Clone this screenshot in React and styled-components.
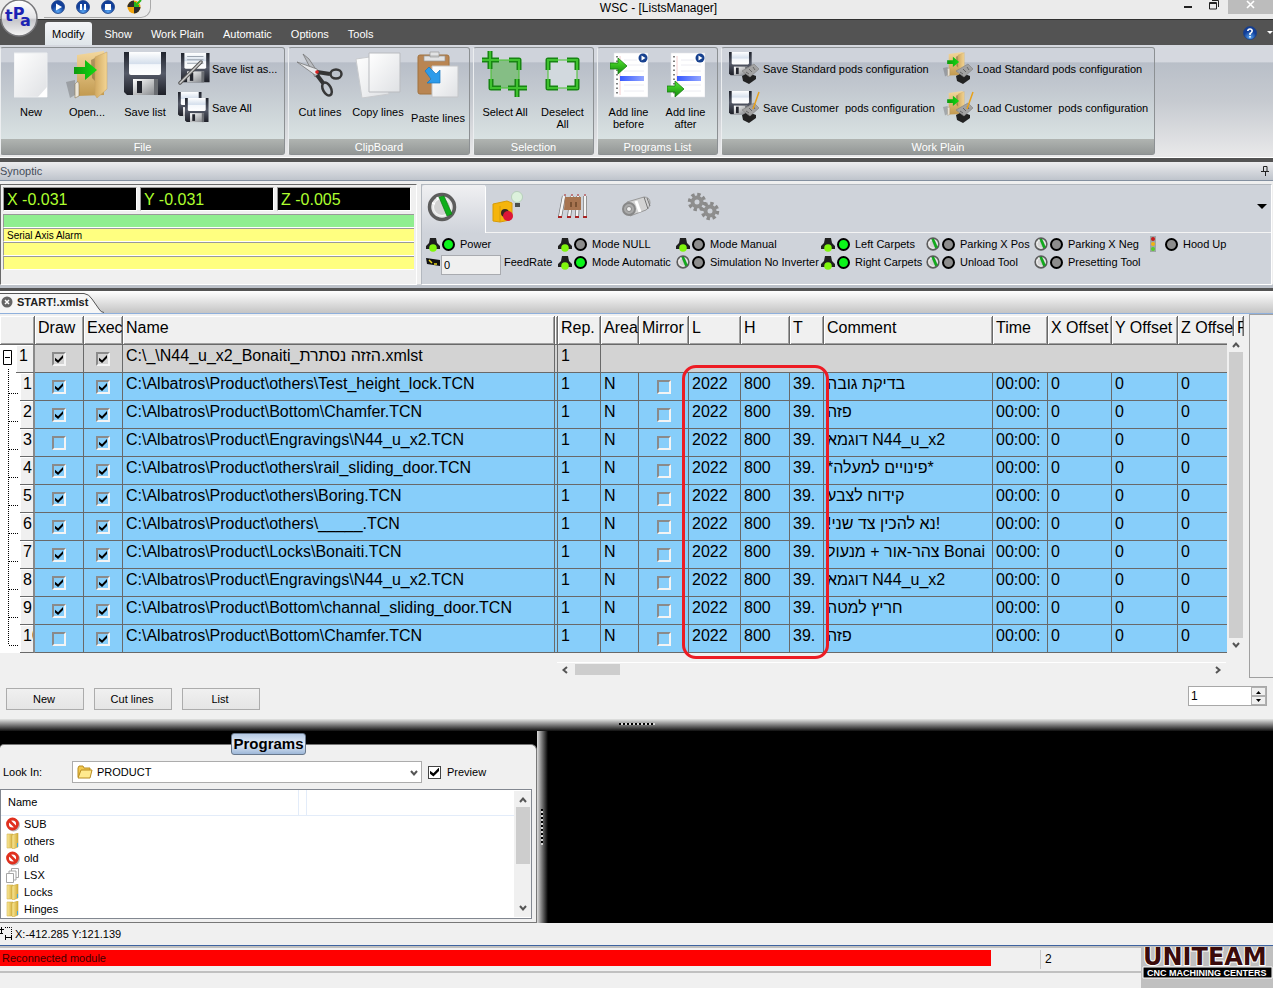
import React from "react";
import styled, { createGlobalStyle } from "styled-components";

const GlobalStyle = createGlobalStyle`
  *, *::before, *::after { box-sizing: border-box; }
  body {
    margin: 0;
    background: #f0f0f0;
    color: #000;
    font: 11px/14px "Liberation Sans", Arial, sans-serif;
  }
  button, input, select { font: inherit; color: inherit; }
  button { padding: 0; border: 0; background: none; }
  svg { display: block; flex: none; }
`;

/* ---------- icons ---------- */

const Defs = () => (
  <svg width="0" height="0" style={{ position: "absolute" }} aria-hidden="true">
    <defs>
      <linearGradient id="paper" x2="1" y2="1">
        <stop stopColor="#fff" /><stop offset="1" stopColor="#dfe1e4" />
      </linearGradient>
      <linearGradient id="disk" x2="0" y2="1">
        <stop stopColor="#1f232c" /><stop offset=".5" stopColor="#555a68" /><stop offset="1" stopColor="#1e2028" />
      </linearGradient>
      <linearGradient id="label" x2="0" y2="1">
        <stop stopColor="#fff" /><stop offset=".5" stopColor="#d5dfec" /><stop offset=".55" stopColor="#f4f7fb" /><stop offset="1" stopColor="#fff" />
      </linearGradient>
      <linearGradient id="metal" x2="1" y2="1">
        <stop stopColor="#fff" /><stop offset="1" stopColor="#7f8286" />
      </linearGradient>
      <linearGradient id="folderBack" x2="0" y2="1">
        <stop stopColor="#f3d79d" /><stop offset="1" stopColor="#c29a50" />
      </linearGradient>
      <linearGradient id="folderFront" x2="1">
        <stop stopColor="#d2aa62" /><stop offset="1" stopColor="#f3d594" />
      </linearGradient>
      <linearGradient id="green" x2="0" y2="1">
        <stop stopColor="#57ea31" /><stop offset="1" stopColor="#118a0c" />
      </linearGradient>
      <linearGradient id="arrow" x2="1">
        <stop stopColor="#0d9a0d" /><stop offset="1" stopColor="#12dc12" />
      </linearGradient>
      <linearGradient id="yellowFolder" x2="1">
        <stop stopColor="#fbeb9c" /><stop offset="1" stopColor="#d3ab35" />
      </linearGradient>
      <linearGradient id="bluebar" x2="1">
        <stop stopColor="#3658ff" /><stop offset="1" stopColor="#93a6ff" />
      </linearGradient>
      <linearGradient id="orb" x2="0" y2="1">
        <stop stopColor="#fff" /><stop offset=".5" stopColor="#e3e3e5" /><stop offset=".55" stopColor="#c5c5c9" /><stop offset="1" stopColor="#f5f5f5" />
      </linearGradient>
      <radialGradient id="blueBall" cy=".85">
        <stop stopColor="#57a5f2" /><stop offset="1" stopColor="#123f99" />
      </radialGradient>
    </defs>
  </svg>
);

const Icon = ({ w, h, children }) => (
  <svg width={w} height={h} viewBox={`0 0 ${w} ${h}`} aria-hidden="true">{children}</svg>
);

const Disk = () => (
  <>
    <path d="M0 0H42V43H3L0 40Z" fill="url(#disk)" />
    <path d="M5 0H37V21Q37 23 35 23H7Q5 23 5 21Z" fill="url(#label)" />
    <path d="M9 27H34V43H9Z" fill="url(#metal)" />
    <path d="M13 29H18V41H13Z" fill="#23252d" />
    <path d="M30 27H34V43H30Z" fill="#6a6d72" />
  </>
);

const Folder = () => (
  <>
    <path d="M0 31L9 29V44L4 47Z" fill="#555" opacity=".35" />
    <path d="M11 4L38 0V44L11 45Z" fill="url(#folderBack)" />
    <path d="M9 33Q13 28 13 34V45L9 47Z" fill="#ece6d8" stroke="#8b7a5b" strokeWidth=".6" />
    <path d="M25 9L29 7V30L26 27Z" fill="#72592c" opacity=".5" />
    <path d="M29 6L41 1V38L31 47L29 44Z" fill="url(#folderFront)" stroke="#c4a162" strokeWidth=".5" />
    <path d="M8 16H19V9L31 19L19 29V23H8Z" fill="url(#arrow)" />
  </>
);

const Pods = ({ pencil }) => (
  <>
    <path d="M13 24L19 21L27 24V27L20 32L14 29Z" fill="#222" />
    <path d="M13 19L25 12L30 17L21 25Z" fill="#a2a2a2" stroke="#858585" strokeWidth=".7" />
    <path d="M17 20L20 22M20 17L23 20M24 15L26 18" stroke="#666" />
    {pencil && <path d="M24 18L30 1" stroke="#e7a11c" strokeWidth="1.5" />}
  </>
);

const GreenArrow = ({ x = 0, y = 0 }) => (
  <path transform={`translate(${x} ${y})`} d="M0 5H8V0L17 8L8 16V11H0Z" fill="url(#green)" stroke="#197d14" strokeWidth=".8" />
);

const ProgramSheet = ({ arrowY }) => (
  <Icon w={38} h={48}>
    <path d="M4 2H38V46H4Z" fill="#fff" stroke="#e2e2e8" strokeWidth=".6" />
    <path d="M7 5V44" stroke="#555" strokeWidth="1.5" strokeDasharray="1.5 3" />
    <path d="M10 5V44" stroke="#f4cccc" />
    <path d="M14 9H27M14 14H34M14 20H34M14 34H34M14 40H34" stroke="#ececf2" />
    <path d="M10 25H34V30H10Z" fill="url(#bluebar)" />
    <circle cx="33" cy="7" r="4.500" fill="#17418f" />
    <path d="M31.500 4.500L35.500 7L31.500 9.500Z" fill="#fff" />
    <GreenArrow y={arrowY} />
  </Icon>
);

const corner = { fill: "none", stroke: "#178512", strokeWidth: 5, strokeLinejoin: "round" };
const cornerHi = { fill: "none", stroke: "#3fc22f", strokeWidth: 2 };

const art = {
  newPage: (
    <Icon w={34} h={46}>
      <path d="M0 1H33V45H0Z" fill="url(#paper)" stroke="#eceef0" />
      <path d="M24 45L33 35V45Z" fill="#fff" />
    </Icon>
  ),
  open: <Icon w={42} h={48}><Folder /></Icon>,
  save: <Icon w={42} h={46}><Disk /></Icon>,
  saveAs: (
    <Icon w={32} h={32}>
      <g transform="translate(3 0) scale(.68)">
        <Disk />
        <path d="M9 5H33M9 10H33M9 15H33" stroke="#9ba4b0" strokeWidth="1.500" />
      </g>
      <path d="M2 30L23 9" stroke="#555" strokeWidth="3.500" strokeLinecap="round" />
      <path d="M2 30L23 9" stroke="#cfcfcf" strokeWidth="1.500" strokeLinecap="round" />
    </Icon>
  ),
  saveAll: (
    <Icon w={32} h={32}>
      <g transform="scale(.56)"><Disk /></g>
      <g transform="translate(7 6) scale(.56)"><Disk /></g>
    </Icon>
  ),
  cut: (
    <Icon w={46} h={46}>
      <path d="M6 2L12 7L22 22L18 25Z" fill="#b9bcc1" stroke="#777" strokeWidth=".8" />
      <path d="M0 10L20 17L23 23L18 23Z" fill="#e6e7ea" stroke="#777" strokeWidth=".8" />
      <path d="M20 20L33 22M20 23L26 31" stroke="#333" strokeWidth="4" />
      <ellipse cx="39" cy="22" rx="5.500" ry="4.500" fill="none" stroke="#373737" strokeWidth="2.500" />
      <ellipse cx="30" cy="37" rx="4" ry="7" transform="rotate(-28 30 37)" fill="none" stroke="#373737" strokeWidth="2.500" />
      <circle cx="20" cy="20" r="1.800" fill="#d22" />
    </Icon>
  ),
  copy: (
    <Icon w={46} h={46}>
      <path d="M1 7L28 3L34 42L7 46Z" fill="url(#paper)" stroke="#c9cbce" />
      <path d="M14 1H45V40H14Z" fill="url(#paper)" stroke="#b9bbbf" />
    </Icon>
  ),
  paste: (
    <Icon w={42} h={48}>
      <rect x="1" y="4" width="31" height="39" rx="2" fill="#b98552" stroke="#a1723f" />
      <path d="M7 5H28V10H7ZM13 1H22V6H13Z" fill="#e2e3e4" stroke="#9a9a9a" strokeWidth=".7" />
      <path d="M15 15H41V46H15Z" fill="url(#paper)" stroke="#c3c5c8" />
      <path d="M8 20L12 16L19 23L23 19V32H10L14 28Z" fill="#2d9bea" stroke="#1877c0" strokeWidth=".7" />
    </Icon>
  ),
  selectAll: (
    <Icon w={48} h={48}>
      <rect x="10" y="9" width="28" height="28" fill="#85be85" stroke="#46c12e" />
      {[corner, cornerHi].map((p, i) => (
        <path key={i} {...p} d="M28 9H38V19M10 28V37H20M9 0V18M1 9H18M36 28V46M27 37H46" />
      ))}
    </Icon>
  ),
  deselectAll: (
    <Icon w={36} h={48}>
      <rect x="3" y="9" width="29" height="28" fill="#d2d9de" stroke="#46c12e" />
      {[corner, cornerHi].map((p, i) => (
        <path key={i} {...p} d="M3 19V9H13M22 9H32V19M3 28V37H13M22 37H32V28" />
      ))}
    </Icon>
  ),
  before: <ProgramSheet arrowY={7} />,
  after: <ProgramSheet arrowY={30} />,
};

const SavePods = ({ pencil }) => (
  <Icon w={32} h={34}><g transform="scale(.54)"><Disk /></g><Pods pencil={pencil} /></Icon>
);
const LoadPods = ({ pencil }) => (
  <Icon w={32} h={34}><g transform="scale(.52)"><Folder /></g><Pods pencil={pencil} /></Icon>
);

const Ball = ({ children }) => (
  <Icon w={14} h={14}>
    <circle cx="7" cy="7" r="6.500" fill="url(#blueBall)" stroke="#1b3f86" strokeWidth=".8" />
    {children}
  </Icon>
);

const Dial = ({ size }) => (
  <svg width={size} height={size} viewBox="0 0 30 30" aria-hidden="true">
    <circle cx="15" cy="15" r="12.500" fill="#e6e6e6" stroke="#5d5d5d" strokeWidth="3.500" />
    <circle cx="15" cy="15" r="8.500" fill="#d2d2d2" stroke="#f8f8f8" />
    <path d="M12 5L17 4L25 22L20 24Z" fill="#0fae1b" stroke="#087a10" strokeWidth=".7" />
    <path d="M5 11L8 12M10 5L11 8" stroke="#fff" strokeWidth="1.500" />
  </svg>
);

const Estop = () => (
  <Icon w={32} h={32}>
    <path d="M1 13L15 10L20 12V26L18 29L8 31L1 30Z" fill="#f5b50c" stroke="#d79c08" />
    <path d="M8 15V31" stroke="#d79c08" />
    <circle cx="13" cy="22" r="4" fill="#3a2620" />
    <circle cx="16" cy="25" r="5" fill="#dc1537" />
    <circle cx="25" cy="6" r="5.500" fill="#dcf1dc" stroke="#a9c7ac" strokeWidth=".7" />
    <path d="M23 12H28V16H23Z" fill="#4b4f4c" />
  </Icon>
);
const Bench = () => (
  <Icon w={32} h={28}>
    <path d="M7 3L3 24M15 3L12 24M21 3L20 24M28 3V24" stroke="#777" strokeWidth="4" />
    <path d="M7 3L3 24M15 3L12 24M21 3L20 24M28 3V24" stroke="#f4f4f4" strokeWidth="2.500" />
    <path d="M8 4H24V17H7Z" fill="#a77450" />
    <path d="M14 9V14M19 9V14" stroke="#6c4529" strokeWidth="1.500" />
    <path d="M1 24H5M10 24H14M18 24H22M26 24H30" stroke="#a92323" strokeWidth="2" />
    <path d="M7 2H9M14 2H16M20 2H22M27 2H29" stroke="#a92323" />
  </Icon>
);
const Motor = () => (
  <Icon w={30} h={24}>
    <path d="M5 7L22 2Q28 2 28 8Q28 13 24 15L8 21Z" fill="#d3d3d3" stroke="#999" />
    <path d="M22 2L26 14M25 3L28 11" stroke="#777" />
    <path d="M14 6L18 17" stroke="#fff" strokeWidth="3" />
    <circle cx="7" cy="14" r="6" fill="#aaa" stroke="#888" strokeWidth="2" />
    <circle cx="7" cy="14" r="2.500" fill="#efefef" stroke="#888" />
  </Icon>
);
const Gears = () => (
  <Icon w={34} h={30}>
    {[[10, 10], [23, 19]].map(([x, y]) => (
      <g key={x}>
        <circle cx={x} cy={y} r="7.500" fill="none" stroke="#8a8a8a" strokeWidth="3.500" strokeDasharray="3.300 2.590" />
        <circle cx={x} cy={y} r="4.500" fill="#cfd3da" stroke="#8e8e8e" strokeWidth="4" />
      </g>
    ))}
  </Icon>
);

const PushKnob = () => (
  <Icon w={14} h={15}>
    <path d="M4 1H10L11 6L14 9V12H0V9L3 6Z" fill="#202020" />
    <circle cx="7" cy="11" r="3.800" fill="#80f60d" />
  </Icon>
);
const Plug = () => (
  <Icon w={14} h={12}>
    <path d="M0 2L14 4V10L1 8Z" fill="#111" />
    <path d="M3 4L6 7M8 8H11" stroke="#e8d81c" strokeWidth="1.500" />
  </Icon>
);
const TrafficLight = () => (
  <Icon w={8} h={16}>
    <path d="M1 0H7V16H1Z" fill="#9fa6a6" />
    <circle cx="4" cy="3" r="2" fill="#c51c1c" /><circle cx="4" cy="8" r="2" fill="#f0b312" /><circle cx="4" cy="13" r="2" fill="#55cf2c" />
  </Icon>
);

const Chevron = ({ dir }) => (
  <svg width="8" height="8" viewBox="0 0 8 8" aria-hidden="true">
    <path
      d={{ up: "M1 6L4 2.500L7 6", down: "M1 2L4 5.500L7 2", left: "M6 1L2.500 4L6 7", right: "M2 1L5.500 4L2 7" }[dir]}
      fill="none" stroke="#555" strokeWidth="2"
    />
  </svg>
);

const Forbidden = () => (
  <Icon w={14} h={15}>
    <circle cx="7.500" cy="8" r="6.500" fill="#8a8a8a" opacity=".6" />
    <circle cx="6.500" cy="7" r="5" fill="#fff" stroke="#e0301e" strokeWidth="2.800" />
    <path d="M3 3.500L10 10.500" stroke="#e0301e" strokeWidth="2.600" />
  </Icon>
);
const SmallFolder = () => (
  <Icon w={14} h={16}>
    <path d="M1 1H7V15H1Z" fill="url(#yellowFolder)" stroke="#d3b651" strokeWidth=".6" />
    <path d="M6 2L12 0V14L7 16L6 15Z" fill="url(#yellowFolder)" stroke="#c9a940" strokeWidth=".6" />
    <path d="M11.500 10V14" stroke="#45a9de" />
  </Icon>
);
const Pages = () => (
  <Icon w={14} h={15}>
    <path d="M5.500 .5H12.500V9.500H5.500Z" fill="#fff" stroke="#a5a5a5" />
    <path d="M3 3H10V12H3Z" fill="#fff" stroke="#a5a5a5" />
    <path d="M.5 5.500H7.500V14.500H.5Z" fill="#fff" stroke="#a5a5a5" />
  </Icon>
);
const OpenFolder = () => (
  <Icon w={16} h={14}>
    <path d="M1 12V3L2 1H6L7 3H13V5" fill="#f1c84e" stroke="#b98c20" />
    <path d="M1 13L4 5H15L13 13Z" fill="#ffe98e" stroke="#b98c20" />
  </Icon>
);

/* ---------- title and menu ---------- */

const Window = styled.div`
  display: flex;
  flex-direction: column;
  min-height: 100vh;
  min-width: 1160px;
  overflow: hidden;
`;

const TitleBar = styled.header`
  position: relative;
  display: grid;
  grid-template-columns: 1fr auto 1fr;
  height: 20px;
  background: #ebebeb;
  border-bottom: 1px solid #303030;
`;

const Title = styled.h1`
  margin: 1px 0 0;
  padding-left: 44px;
  font-size: 12px;
  line-height: 14px;
  font-weight: 400;
`;

const QuickAccess = styled.div`
  display: flex;
  gap: 11px;
  width: 107px;
  height: 18px;
  margin-left: 44px;
  padding-left: 7px;
  border: 1px solid #aaa;
  border-top: 0;
  border-left: 0;
  border-radius: 0 0 10px 0;
`;

const QuickButton = styled.button`
  height: 14px;
`;

const AppOrb = styled.button`
  position: absolute;
  left: 0;
  top: 0;
  z-index: 2;
`;

const OrbText = styled.text`
  font: 700 16px "DejaVu Sans", sans-serif;
  fill: #1c23b4;
`;

const WindowControls = styled.div`
  display: flex;
  justify-content: flex-end;
  align-items: flex-start;
`;

const WindowButton = styled.button`
  display: flex;
  justify-content: center;
  width: ${(p) => (p.$close ? 45 : 26)}px;
  height: 14px;
  background: ${(p) => (p.$close ? "#bcbcbc" : "none")};
`;

const MenuBar = styled.nav`
  display: flex;
  align-items: flex-end;
  gap: 1px;
  height: 25px;
  padding-left: 45px;
  background: #535353;
`;

const MenuItem = styled.button`
  height: 23px;
  padding: 0 ${(p) => (p.$active ? 8 : 9)}px 0 ${(p) => (p.$active ? 7 : 9)}px;
  margin-right: ${(p) => (p.$active ? 2 : 0)}px;
  color: ${(p) => (p.$active ? "#000" : "#fff")};
  background: ${(p) => (p.$active ? "linear-gradient(#f4f5f8, #dfe5e9)" : "none")};
  border-radius: 3px 3px 0 0;
  font-size: 11px;
`;

const HelpButton = styled.button`
  display: flex;
  align-items: center;
  gap: 9px;
  height: 25px;
  margin-left: auto;
`;

/* ---------- ribbon ---------- */

const Ribbon = styled.div`
  display: flex;
  gap: 3px;
  height: 112px;
  padding: 2px 0;
  background: linear-gradient(#d5d8df 0 15%, #b9bfc8 16%, #c6cad0 50%, #e9e9ea);
`;

const Group = styled.section`
  display: flex;
  flex-direction: column;
  border: 1px solid #8c9093;
  border-left-color: #eceef0;
  border-radius: 3px;
  width: ${(p) => p.$w}px;
  background: linear-gradient(#cfd3db 0 13%, #b8bec8 14%, #c3c9d0 40%, #dae3e3 88%);
`;

const GroupBody = styled.div`
  display: flex;
  flex: 1;
  padding: 2px 0 0 2px;
`;

const GroupCaption = styled.h2`
  margin: 0;
  height: 15px;
  font-size: 11px;
  line-height: 16px;
  font-weight: 400;
  text-align: center;
  color: #fff;
  background: linear-gradient(#b0b4b1, #939796);
`;

const BigButton = styled.button`
  display: flex;
  flex-direction: column;
  align-items: center;
  width: ${(p) => p.$w}px;
  line-height: 12px;
`;

const IconBox = styled.span`
  display: flex;
  align-items: center;
  height: ${(p) => (p.$tall ? 62 : 56)}px;
  padding-bottom: ${(p) => (p.$tall ? 12 : 6)}px;
`;

const Stack = styled.div`
  display: flex;
  flex-direction: column;
  width: ${(p) => p.$w}px;
  margin-left: ${(p) => (p.$inset ? 5 : 3)}px;
`;

const SmallButton = styled.button`
  display: flex;
  align-items: center;
  gap: 2px;
  height: 39px;
  padding-bottom: 2px;
  white-space: pre;
`;

/* ---------- synoptic ---------- */

const DarkRule = styled.div`
  height: ${(p) => p.$h}px;
  background: #535353;
  border-top: ${(p) => (p.$h > 3 ? "1px solid #fff" : "0")};
`;

const PanelHeader = styled.div`
  display: flex;
  justify-content: space-between;
  align-items: center;
  height: 19px;
  padding-right: 4px;
  border-bottom: 1px solid #8490a0;
  background: linear-gradient(#ececee, #bfc4cc);
  color: #444c58;
`;

const PanelTitle = styled.h2`
  margin: 0;
  font-size: 11px;
  font-weight: 400;
`;

const Synoptic = styled.div`
  display: flex;
  gap: 4px;
  height: 107px;
  padding: 3px 1px 3px 0;
  background: linear-gradient(#efefef 0 103px, #bcc1c9 104px);
`;

const AxisPanel = styled.div`
  width: 417px;
  padding: 2px;
  border: 1px solid #fff;
  border-top: 1px solid #696969;
  border-left: 1px solid #696969;
  background: #f0f0f0;
`;

const AxisRow = styled.div`
  display: grid;
  grid-template-columns: repeat(3, 134px);
  gap: 3px;
  margin-bottom: 3px;
`;

const Axis = styled.output`
  height: 24px;
  padding-left: 3px;
  border: 1px solid #fff;
  border-top-color: #999;
  border-left-color: #999;
  background: #000;
  color: #adff2f;
  font-size: 16px;
  line-height: 23px;
`;

const Message = styled.div`
  height: 14px;
  padding-left: 3px;
  border-top: 1px solid #999;
  border-left: 1px solid #999;
  border-bottom: 1px solid #fff;
  background: ${(p) => (p.$green ? "#90ee90" : "#ffff80")};
  font-size: 10px;
  line-height: 13px;
`;

const ControlPanel = styled.div`
  flex: 1;
  border: 1px solid #b3b8bf;
  border-right-color: #fff;
  border-bottom-color: #fff;
  background: #cfd3da;
`;

const IconTabs = styled.div`
  display: flex;
  height: 48px;
  border-bottom: 1px solid #f4f4f4;
`;

const IconTab = styled.button`
  display: flex;
  align-items: center;
  width: 65px;
  padding: 0 0 4px 5px;
  ${(p) => p.$active && `
    width: 64px;
    margin-right: 1px;
    margin-bottom: -1px;
    border-right: 1px solid #fff;
    border-radius: 3px 3px 0 0;
    background: linear-gradient(#f0f0f2, #cfd3da);
  `}
`;

const MoreTabs = styled.button`
  margin: 0 4px 4px auto;
`;

const Signals = styled.div`
  display: grid;
  grid-template-columns: 132px 118px 145px 105px 108px 115px 1fr;
  grid-template-rows: 18px 18px;
  padding: 2px 0 0 4px;
`;

const Signal = styled.label`
  display: flex;
  align-items: center;
  gap: 2px;
  white-space: nowrap;
`;

const Led = styled.span`
  width: 13px;
  height: 13px;
  margin-right: 3px;
  border: 2px solid #000;
  border-radius: 50%;
  background: ${(p) => (p.$on ? "#0bf51a" : "#8d8d8d")};
`;

const LampGap = styled.span`
  width: 4px;
`;

const FeedInput = styled.input`
  width: 60px;
  height: 20px;
  margin: 5px 1px 0 -1px;
  padding: 0 2px;
  border: 1px solid #a9abb0;
  background: #f0f0f0;
`;

/* ---------- document tab ---------- */

const DocTabs = styled.div`
  height: 23px;
  border-bottom: 1px solid #8fb0dc;
  background: linear-gradient(#fff, #c4c4c4);
`;

const DocTab = styled.button`
  position: relative;
  display: flex;
  align-items: center;
  width: 103px;
  height: 22px;
  font-weight: 700;
  color: #222;
`;

const TabShape = styled.svg`
  position: absolute;
  left: 0;
  top: 0;
  z-index: -1;
`;

const DocTabFace = styled.span`
  display: flex;
  align-items: center;
  gap: 4px;
  isolation: isolate;
`;

/* ---------- grid ---------- */

const Workspace = styled.main`
  display: flex;
  gap: 5px;
  height: 364px;
  background: #f0f0f0;
`;

const GridArea = styled.div`
  position: relative;
  flex: 1;
  padding-top: 2px;
`;

const SidePane = styled.aside`
  width: 24px;
  border: 1px solid #a0a0a0;
  border-right: 0;
`;

const Grid = styled.table`
  width: 100%;
  table-layout: fixed;
  border-collapse: separate;
  border-spacing: 0;
  font-size: 16px;
  line-height: 20px;
`;

const HeadCell = styled.th`
  height: 29px;
  padding: 2px 0 0 3px;
  overflow: hidden;
  white-space: nowrap;
  text-align: left;
  vertical-align: top;
  font-weight: 400;
  background: #f0f0f0;
  border-right: 1px solid #696969;
  border-bottom: 1px solid #696969;
  box-shadow: inset 1px 1px #fff, inset -1px -1px #a0a0a0;
`;

const Row = styled.tr`
  background: ${(p) => (p.$summary ? "#d3d3d3" : "#87cefa")};
`;

const Cell = styled.td`
  height: 28px;
  padding: ${(p) => (p.$center ? 0 : 1)}px 0 0 ${(p) => (p.$center ? 0 : 3)}px;
  overflow: hidden;
  white-space: nowrap;
  vertical-align: top;
  text-align: ${(p) => (p.$center ? "center" : "left")};
  border-right: 1px solid #696969;
  border-bottom: 1px solid #696969;
`;

const RowHead = styled.th`
  height: 28px;
  padding: 0;
  vertical-align: top;
  font-weight: 400;
  background: #fff;
`;

const RowHeadFace = styled.div`
  display: flex;
  height: 28px;
`;

const TreePart = styled.span`
  width: ${(p) => (p.$root ? 16 : 20)}px;
  flex: none;
`;

const RowNumber = styled.span`
  flex: 1;
  overflow: hidden;
  padding: 1px 0 0 3px;
  text-align: left;
  background: #f0f0f0;
  border-right: 2px solid #8a8a8a;
  border-bottom: 1px solid #696969;
  box-shadow: inset 1px 1px #fff;
`;

const Check = styled.input`
  appearance: none;
  position: relative;
  display: inline-block;
  width: ${(p) => (p.$flat ? 13 : 14)}px;
  height: ${(p) => (p.$flat ? 13 : 14)}px;
  margin: ${(p) => (p.$flat ? "0" : "7px 0 0")};
  border: ${(p) => (p.$flat ? "1px solid #444" : "2px solid #f4f4f4")};
  border-top-color: ${(p) => (p.$flat ? "#444" : "#8a8a8a")};
  border-left-color: ${(p) => (p.$flat ? "#444" : "#8a8a8a")};
  background: ${(p) => (p.$flat ? "#fff" : "transparent")};
  &:checked::before {
    content: "";
    position: absolute;
    inset: 1px;
    background: #000;
    clip-path: polygon(0 35%, 38% 65%, 100% 0, 100% 38%, 38% 100%, 0 70%);
  }
`;

const VScroll = styled.div`
  position: absolute;
  right: 0;
  top: ${(p) => p.$top}px;
  bottom: ${(p) => p.$bottom}px;
  width: 17px;
  display: flex;
  flex-direction: column;
  align-items: center;
  justify-content: space-between;
  padding: 5px 0;
  background: #f0f0f0;
`;

const VThumb = styled.div`
  width: 14px;
  margin: 3px 0;
  background: #cdcdcd;
  ${(p) => (p.$h ? `height: ${p.$h}px; margin-bottom: auto;` : "flex: 1;")}
`;

const HScroll = styled.div`
  display: flex;
  align-items: center;
  width: 669px;
  height: 14px;
  margin: 9px 18px 0 auto;
  padding: 0 4px;
  border-top: 1px solid #fff;
`;

const HThumb = styled.div`
  width: 45px;
  height: 11px;
  margin: 0 auto 0 6px;
  background: #cdcdcd;
`;

const Highlight = styled.div`
  position: absolute;
  right: 415px;
  top: 51px;
  width: 147px;
  height: 294px;
  border: 3px solid #ed1c24;
  border-radius: 14px;
  pointer-events: none;
`;

const Actions = styled.div`
  display: flex;
  gap: 10px;
  height: 41px;
  padding: 8px 6px 0;
`;

const PlainButton = styled.button`
  width: 78px;
  height: 22px;
  margin-top: 2px;
  padding-right: 2px;
  border: 1px solid #acacac;
  background: linear-gradient(#f0f0f0, #e5e5e5);
`;

const Spinner = styled.div`
  display: flex;
  width: 79px;
  height: 20px;
  margin-left: auto;
  border: 1px solid #a8a8a8;
  background: #fff;
`;

const SpinInput = styled.input`
  width: 62px;
  padding: 0 2px;
  border: 0;
  background: none;
  font-size: 12px;
`;

const SpinButtons = styled.div`
  display: grid;
  flex: 1;
  grid-template-rows: 1fr 1fr;
`;

const SpinButton = styled.button`
  display: flex;
  align-items: center;
  justify-content: center;
  border: 1px solid #b0b0b0;
  background: #f0f0f0;
`;

/* ---------- lower area ---------- */

const HSplitter = styled.div`
  display: flex;
  justify-content: center;
  height: 12px;
  padding-top: 4px;
  background: linear-gradient(#e4e5e4, #858585 45%, #111);
`;

const HGrip = styled.div`
  width: 36px;
  height: 2px;
  background: repeating-linear-gradient(90deg, #000 0 2px, #d8d8d8 2px 4px);
`;

const Lower = styled.div`
  display: flex;
  flex: 1;
  min-height: 191px;
  background: #000;
`;

const Browser = styled.section`
  display: flex;
  flex-direction: column;
  width: 537px;
  padding-top: 2px;
`;

const ProgramsTab = styled.button`
  z-index: 1;
  align-self: center;
  height: 22px;
  margin-bottom: -11px;
  padding: 0 1px;
  border: 1px solid #68788c;
  border-radius: 3px;
  background: linear-gradient(#b5c9e3, #e4edf8 50%, #9db7d8);
  font-size: 15px;
  font-weight: 700;
`;

const BrowserBody = styled.div`
  display: flex;
  flex: 1;
  flex-direction: column;
  padding: 16px 4px 3px 0;
  border: 1px solid #777;
  border-left: 0;
  border-radius: 4px 6px 0 0;
  background: #f0f0f0;
`;

const LookRow = styled.div`
  display: flex;
  align-items: center;
  height: 22px;
  margin-bottom: 6px;
`;

const LookLabel = styled.label`
  width: 72px;
  padding-left: 3px;
`;

const SelectBox = styled.div`
  position: relative;
  width: 350px;
  margin-right: 6px;
`;

const LookSelect = styled.select`
  appearance: none;
  display: block;
  width: 100%;
  height: 22px;
  padding: 0 24px;
  border: 1px solid #acacac;
  border-radius: 0;
  background: #fff;
`;

const SelectIcon = styled.span`
  position: absolute;
  top: ${(p) => (p.$right ? 8 : 4)}px;
  ${(p) => (p.$right ? "right: 4px;" : "left: 5px;")}
  pointer-events: none;
`;

const PreviewLabel = styled.label`
  display: flex;
  align-items: center;
  gap: 6px;
`;

const FileList = styled.div`
  position: relative;
  flex: 1;
  border: 1px solid #828790;
  background: #fff;
`;

const Files = styled.table`
  width: 513px;
  border-collapse: collapse;
`;

const FileHead = styled.th`
  height: 25px;
  padding: 0 0 0 7px;
  width: ${(p) => (p.$w ? `${p.$w}px` : "auto")};
  text-align: left;
  font-weight: 400;
  border-right: ${(p) => (p.$w ? "1px solid #e3ecf9" : "0")};
  border-bottom: 1px solid #e3ecf9;
`;

const FileCell = styled.td`
  height: 17px;
  padding: 0 0 0 5px;
`;

const FileFace = styled.span`
  display: flex;
  align-items: center;
  gap: 4px;
  height: 17px;
`;

const VSplitter = styled.div`
  display: flex;
  align-items: center;
  width: 11px;
  padding-left: 4px;
  background: linear-gradient(90deg, #ddd, #777 45%, #000);
`;

const VGrip = styled.div`
  width: 2px;
  height: 36px;
  background: repeating-linear-gradient(#000 0 2px, #d8d8d8 2px 4px);
`;

/* ---------- status ---------- */

const StatusLine = styled.div`
  display: flex;
  align-items: center;
  gap: 3px;
  height: 22px;
  background: #f0f0f0;
`;

const Footer = styled.footer`
  display: flex;
  height: 44px;
  border-top: 1px solid #3e63a0;
  background: #c0c0c0;
`;

const FooterRows = styled.div`
  display: flex;
  flex: 1;
  flex-direction: column;
  gap: 2px;
  padding: 2px 0 1px;
`;

const FooterRow = styled.div`
  display: flex;
  flex: ${(p) => (p.$tall ? "0 0 22px" : "1")};
  padding: 2px 0;
  background: #f0f0f0;
`;

const Alarm = styled.div`
  flex: 1;
  height: 16px;
  padding-left: 2px;
  background: #f00;
  color: #3c0000;
  line-height: 17px;
`;

const Counter = styled.div`
  width: 101px;
  margin-left: 49px;
  padding-left: 4px;
  border-left: 1px solid #c8c8c8;
  font-size: 12px;
  line-height: 19px;
`;

const Brand = styled.svg`
  margin: 1px 0 0 1px;
`;

const BrandName = styled.text`
  font: 700 24px "DejaVu Sans", sans-serif;
  fill: #3b0b0b;
  stroke: #fff;
  stroke-width: 2px;
  paint-order: stroke;
`;

const BrandLine = styled.text`
  font: 700 9px "Liberation Sans", sans-serif;
  fill: #fff;
`;

/* ---------- data ---------- */

const menus = ["Modify", "Show", "Work Plain", "Automatic", "Options", "Tools"];

const columns = [
  ["", 35], ["Draw", 49], ["Exec", 39], ["Name", null], ["", 3], ["Rep.", 43], ["Area", 38],
  ["Mirror", 50], ["L", 52], ["H", 49], ["T", 34], ["Comment", 169], ["Time", 55],
  ["X Offset", 64], ["Y Offset", 66], ["Z Offset", 56], ["F", 10],
];

const programs = [
  ["others\\Test_height_lock.TCN", "בדיקת גובה", true],
  ["Bottom\\Chamfer.TCN", "פזה", true],
  ["Engravings\\N44_u_x2.TCN", "דוגמא N44_u_x2", false],
  ["others\\rail_sliding_door.TCN", "*פינויים למעלה*", true],
  ["others\\Boring.TCN", "קידוח לצבע", true],
  ["others\\_____.TCN", "!נא להכין צד שני!", true],
  ["Locks\\Bonaiti.TCN", "צהר-אור + מנעול Bonai", true],
  ["Engravings\\N44_u_x2.TCN", "דוגמא N44_u_x2", true],
  ["Bottom\\channal_sliding_door.TCN", "חריץ למטה", true],
  ["Bottom\\Chamfer.TCN", "פזה", false],
];

const signals = [
  [["knob", true, "Power"], null],
  [["knob", false, "Mode NULL"], ["knob", true, "Mode Automatic"]],
  [["knob", false, "Mode Manual"], ["dial", false, "Simulation No Inverter"]],
  [["knob", true, "Left Carpets"], ["knob", true, "Right Carpets"]],
  [["dial", false, "Parking X Pos"], ["dial", false, "Unload Tool"]],
  [["dial", false, "Parking X Neg"], ["dial", false, "Presetting Tool"]],
  [["light", false, "Hood Up"], null],
];

const files = [
  ["SUB", Forbidden], ["others", SmallFolder], ["old", Forbidden],
  ["LSX", Pages], ["Locks", SmallFolder], ["Hinges", SmallFolder],
];

/* ---------- parts ---------- */

const Tool = ({ w, icon, label, tall }) => (
  <BigButton $w={w}><IconBox $tall={tall}>{art[icon]}</IconBox>{label}</BigButton>
);

const RibbonGroup = ({ w, caption, children }) => (
  <Group $w={w}><GroupBody>{children}</GroupBody><GroupCaption>{caption}</GroupCaption></Group>
);

const SignalItem = ({ data, row, col }) => {
  const [kind, on, text] = data;
  return (
    <Signal as="div" style={{ gridRow: row, gridColumn: col }}>
      {kind === "knob" && <PushKnob />}
      {kind === "dial" && <Dial size={14} />}
      {kind === "light" && <><TrafficLight /><LampGap /></>}
      <Led $on={on} />{text}
    </Signal>
  );
};

const Tree = ({ root, last }) => (
  <TreePart $root={root}>
    {root ? (
      <Icon w={16} h={28}>
        <path d="M3.500 5.500H11.500V19.500H3.500Z" fill="#fff" stroke="#000" />
        <path d="M5 12.500H10" stroke="#000" />
        <path d="M8.500 24V28" stroke="#000" strokeDasharray="1 1" />
      </Icon>
    ) : (
      <Icon w={20} h={28}>
        <path d={`M8.500 0V${last ? 20 : 28}M9 20.500H19`} stroke="#000" strokeDasharray="1 1" fill="none" />
      </Icon>
    )}
  </TreePart>
);

const ProgramRow = ({ n, path, comment, draw, last }) => (
  <Row>
    <RowHead scope="row">
      <RowHeadFace><Tree last={last} /><RowNumber>{n}</RowNumber></RowHeadFace>
    </RowHead>
    <Cell $center><Check type="checkbox" defaultChecked={draw} aria-label={`Draw ${n}`} /></Cell>
    <Cell $center><Check type="checkbox" defaultChecked aria-label={`Exec ${n}`} /></Cell>
    <Cell>{`C:\\Albatros\\Product\\${path}`}</Cell>
    <Cell />
    <Cell>1</Cell>
    <Cell>N</Cell>
    <Cell $center><Check type="checkbox" aria-label={`Mirror ${n}`} /></Cell>
    <Cell>2022</Cell>
    <Cell>800</Cell>
    <Cell>39.</Cell>
    <Cell>{comment}</Cell>
    <Cell>00:00:</Cell>
    <Cell>0</Cell>
    <Cell>0</Cell>
    <Cell>0</Cell>
    <Cell />
  </Row>
);

export default function App() {
  return (
    <Window>
      <GlobalStyle />
      <Defs />
      <TitleBar>
        <AppOrb aria-label="Application menu">
          <Icon w={40} h={38}>
            <circle cx="19" cy="18" r="18" fill="url(#orb)" stroke="#77777a" strokeWidth="1.500" />
            <OrbText x="5" y="21">t<tspan dy="-2">P</tspan><tspan dx="-4" dy="7">a</tspan></OrbText>
          </Icon>
        </AppOrb>
        <QuickAccess>
          <QuickButton aria-label="Start"><Ball><path d="M5 3.500L11 7L5 10.500Z" fill="#fff" /></Ball></QuickButton>
          <QuickButton aria-label="Pause"><Ball><path d="M4 4H6V10H4ZM8 4H10V10H8Z" fill="#fff" /></Ball></QuickButton>
          <QuickButton aria-label="Stop"><Ball><path d="M4 4H10V10H4Z" fill="#fff" /></Ball></QuickButton>
          <QuickButton aria-label="Origin">
            <Icon w={17} h={14}>
              <circle cx="8" cy="7" r="6.500" fill="#f0a30c" />
              <path d="M8 7V.5A6.500 6.500 0 0 0 1.500 7ZM8 7V13.500A6.500 6.500 0 0 0 14.500 7Z" fill="#2c2c2c" />
              <path d="M9 6L15 0M9 2V6H13" stroke="#25b81a" strokeWidth="2" fill="none" />
            </Icon>
          </QuickButton>
        </QuickAccess>
        <Title>WSC - [ListsManager]</Title>
        <WindowControls>
          <WindowButton aria-label="Minimize"><Icon w={10} h={12}><path d="M0 7H8" stroke="#222" strokeWidth="2" /></Icon></WindowButton>
          <WindowButton aria-label="Restore"><Icon w={12} h={12}><path d="M.5 2.500H7.500V9H.5ZM0 3.500H8M3 .5H9.500V7" fill="none" stroke="#222" /></Icon></WindowButton>
          <WindowButton $close aria-label="Close"><Icon w={10} h={10}><path d="M1 1L8 8M8 1L1 8" stroke="#fff" strokeWidth="1.600" /></Icon></WindowButton>
        </WindowControls>
      </TitleBar>
      <MenuBar>
        {menus.map((m, i) => <MenuItem key={m} $active={i === 0}>{m}</MenuItem>)}
        <HelpButton aria-label="Help">
          <Ball><path d="M4.800 5Q5 3 7 3T9.200 5Q9 6.500 7 7.500V9M7 10V11.500" fill="none" stroke="#fff" strokeWidth="1.600" /></Ball>
          <Icon w={7} h={6}><path d="M1 1H7L4 4Z" fill="#fff" /></Icon>
        </HelpButton>
      </MenuBar>

      <Ribbon>
        <RibbonGroup w={285} caption="File">
          <Tool w={56} icon="newPage" label="New" />
          <Tool w={56} icon="open" label="Open..." />
          <Tool w={60} icon="save" label="Save list" />
          <Stack $w={102}>
            <SmallButton>{art.saveAs}Save list as...</SmallButton>
            <SmallButton>{art.saveAll}Save All</SmallButton>
          </Stack>
        </RibbonGroup>
        <RibbonGroup w={182} caption="ClipBoard">
          <Tool w={58} icon="cut" label="Cut lines" />
          <Tool w={58} icon="copy" label="Copy lines" />
          <Tool w={62} icon="paste" label="Paste lines" tall />
        </RibbonGroup>
        <RibbonGroup w={121} caption="Selection">
          <Tool w={58} icon="selectAll" label="Select All" />
          <Tool w={57} icon="deselectAll" label={<>Deselect<br />All</>} />
        </RibbonGroup>
        <RibbonGroup w={121} caption="Programs List">
          <Tool w={57} icon="before" label={<>Add line<br />before</>} />
          <Tool w={57} icon="after" label={<>Add line<br />after</>} />
        </RibbonGroup>
        <RibbonGroup w={434} caption="Work Plain">
          <Stack $w={209} $inset>
            <SmallButton><SavePods />Save Standard pods configuration</SmallButton>
            <SmallButton><SavePods pencil />{"Save Customer  pods configuration"}</SmallButton>
          </Stack>
          <Stack $w={209} $inset>
            <SmallButton><LoadPods />Load Standard pods configuration</SmallButton>
            <SmallButton><LoadPods pencil />{"Load Customer  pods configuration"}</SmallButton>
          </Stack>
        </RibbonGroup>
      </Ribbon>
      <DarkRule $h={5} />

      <PanelHeader>
        <PanelTitle>Synoptic</PanelTitle>
        <button aria-label="Pin panel">
          <Icon w={8} h={10}><path d="M2.500 .5H6V5M2.500 .5V5M0 5.500H8M4.500 6V10" fill="none" stroke="#222" /></Icon>
        </button>
      </PanelHeader>
      <Synoptic>
        <AxisPanel>
          <AxisRow>
            <Axis>X -0.031</Axis><Axis>Y -0.031</Axis><Axis>Z -0.005</Axis>
          </AxisRow>
          <Message $green />
          <Message>Serial Axis Alarm</Message>
          <Message />
          <Message />
        </AxisPanel>
        <ControlPanel>
          <IconTabs>
            <IconTab $active aria-label="Machine"><Dial size={30} /></IconTab>
            <IconTab aria-label="Emergency"><Estop /></IconTab>
            <IconTab aria-label="Bench"><Bench /></IconTab>
            <IconTab aria-label="Spindle"><Motor /></IconTab>
            <IconTab aria-label="Setup"><Gears /></IconTab>
            <MoreTabs aria-label="More tabs"><Icon w={10} h={6}><path d="M0 0H10L5 5Z" /></Icon></MoreTabs>
          </IconTabs>
          <Signals>
            {signals.flatMap(([a, b], i) => [
              a && <SignalItem key={`a${i}`} data={a} row={1} col={i + 1} />,
              b && <SignalItem key={`b${i}`} data={b} row={2} col={i + 1} />,
            ])}
            <Signal style={{ gridRow: 2, gridColumn: 1 }}>
              <Plug /><FeedInput defaultValue="0" />FeedRate
            </Signal>
          </Signals>
        </ControlPanel>
      </Synoptic>
      <DarkRule $h={3} />

      <DocTabs>
        <DocTab>
          <DocTabFace>
            <TabShape width="104" height="22" viewBox="0 0 104 22" aria-hidden="true">
              <path d="M0 2.500H84Q89 3 92 8L99 18Q101 21.500 104 21.500V22H0Z" fill="#f6f6f6" />
              <path d="M0 2.500H84Q89 3 92 8L99 18Q101 21.500 104 21.500" fill="none" stroke="#555" />
            </TabShape>
            <Icon w={13} h={12}>
              <circle cx="7" cy="6" r="5.500" fill="#666" />
              <path d="M5 4L9 8M9 4L5 8" stroke="#fff" strokeWidth="1.500" />
            </Icon>
            START!.xmlst
          </DocTabFace>
        </DocTab>
      </DocTabs>

      <Workspace>
        <GridArea>
          <Grid>
            <colgroup>
              {columns.map(([, w], i) => <col key={i} style={w ? { width: w } : undefined} />)}
            </colgroup>
            <thead>
              <tr>{columns.map(([t], i) => <HeadCell key={i} scope="col">{t}</HeadCell>)}</tr>
            </thead>
            <tbody>
              <Row $summary>
                <RowHead scope="row">
                  <RowHeadFace><Tree root /><RowNumber>1</RowNumber></RowHeadFace>
                </RowHead>
                <Cell $center><Check type="checkbox" defaultChecked aria-label="Draw list" /></Cell>
                <Cell $center><Check type="checkbox" defaultChecked aria-label="Exec list" /></Cell>
                <Cell>{"C:\\_\\N44_u_x2_Bonaiti_הזזה נסתרת.xmlst"}</Cell>
                <Cell />
                <Cell>1</Cell>
                <Cell colSpan={11} />
              </Row>
              {programs.map(([path, comment, draw], i) => (
                <ProgramRow key={i} n={i + 1} path={path} comment={comment} draw={draw} last={i === 9} />
              ))}
            </tbody>
          </Grid>
          <VScroll $top={22} $bottom={24}>
            <Chevron dir="up" /><VThumb /><Chevron dir="down" />
          </VScroll>
          <Highlight />
          <HScroll><Chevron dir="left" /><HThumb /><Chevron dir="right" /></HScroll>
        </GridArea>
        <SidePane />
      </Workspace>
      <Actions>
        <PlainButton>New</PlainButton>
        <PlainButton>Cut lines</PlainButton>
        <PlainButton>List</PlainButton>
        <Spinner>
          <SpinInput defaultValue="1" aria-label="Repetitions" />
          <SpinButtons>
            <SpinButton aria-label="Increase"><Icon w={7} h={4}><path d="M1 4H6L3.500 1Z" /></Icon></SpinButton>
            <SpinButton aria-label="Decrease"><Icon w={7} h={4}><path d="M1 0H6L3.500 3Z" /></Icon></SpinButton>
          </SpinButtons>
        </Spinner>
      </Actions>

      <HSplitter><HGrip /></HSplitter>
      <Lower>
        <Browser>
          <ProgramsTab>Programs</ProgramsTab>
          <BrowserBody>
            <LookRow>
              <LookLabel htmlFor="look-in">Look In:</LookLabel>
              <SelectBox>
                <LookSelect id="look-in"><option>PRODUCT</option></LookSelect>
                <SelectIcon><OpenFolder /></SelectIcon>
                <SelectIcon $right><Chevron dir="down" /></SelectIcon>
              </SelectBox>
              <PreviewLabel><Check $flat type="checkbox" defaultChecked />Preview</PreviewLabel>
            </LookRow>
            <FileList>
              <Files>
                <thead><tr><FileHead $w={297}>Name</FileHead><FileHead $w={6} /><FileHead /></tr></thead>
                <tbody>
                  {files.map(([name, Pic]) => (
                    <tr key={name}><FileCell colSpan={3}><FileFace><Pic />{name}</FileFace></FileCell></tr>
                  ))}
                </tbody>
              </Files>
              <VScroll $top={1} $bottom={1}>
                <Chevron dir="up" /><VThumb $h={57} /><Chevron dir="down" />
              </VScroll>
            </FileList>
          </BrowserBody>
        </Browser>
        <VSplitter><VGrip /></VSplitter>
      </Lower>

      <StatusLine>
        <Icon w={12} h={14}>
          <path d="M0 2.500H4M1.500 0V6M0 6.500H3M5 10.500H11M5.500 8V13M11.500 8V13" fill="none" stroke="#000" />
          <path d="M5 .5H11.500V7" fill="none" stroke="#000" strokeDasharray="1 1" />
        </Icon>
        X:-412.285 Y:121.139
      </StatusLine>
      <Footer>
        <FooterRows>
          <FooterRow $tall><Alarm>Reconnected module</Alarm><Counter>2</Counter></FooterRow>
          <FooterRow />
        </FooterRows>
        <Brand width="131" height="40" viewBox="0 0 131 40" role="img" aria-label="Uniteam CNC Machining Centers">
          <BrandName x="1" y="18">UNITEAM</BrandName>
          <path d="M1 20H130V31H1Z" fill="#000" stroke="#fff" />
          <BrandLine x="5" y="29">CNC MACHINING CENTERS</BrandLine>
        </Brand>
      </Footer>
    </Window>
  );
}
